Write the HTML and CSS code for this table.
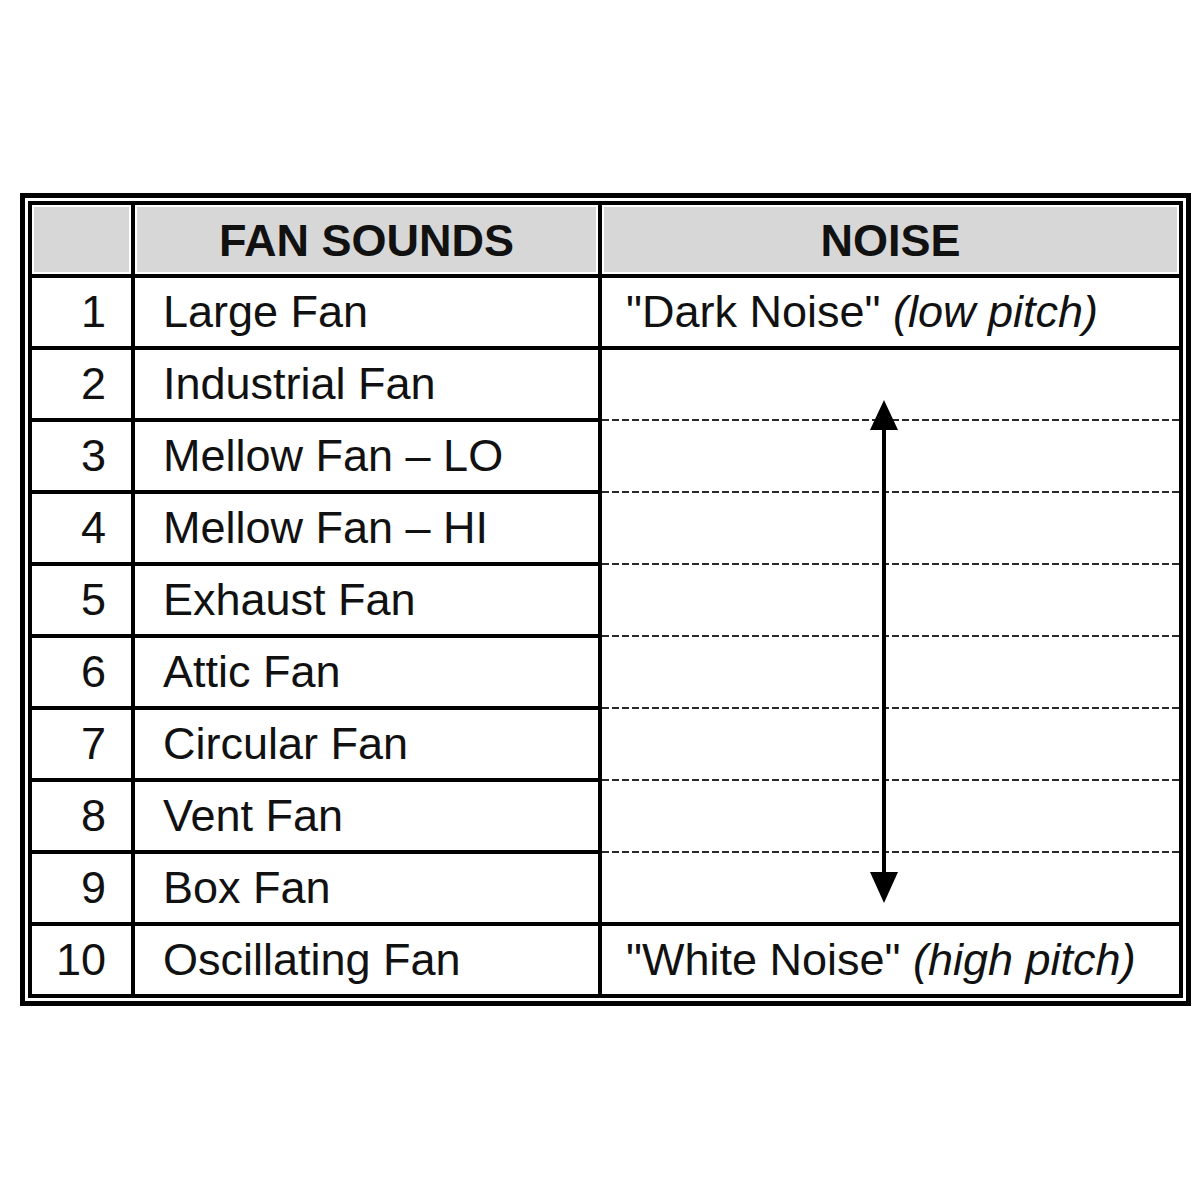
FILE: index.html
```html
<!DOCTYPE html>
<html lang="en">
<head>
<meta charset="utf-8">
<title>Fan Sounds</title>
<link rel="stylesheet" href="styles.css">
</head>
<body>
<div class="frame">
  <div class="table">
    <div class="cell head"></div>
    <div class="cell head">FAN SOUNDS</div>
    <div class="cell head">NOISE</div>

    <div class="cell num">1</div>
    <div class="cell name">Large Fan</div>
    <div class="cell noise"><span>"Dark Noise" <i>(low pitch)</i></span></div>

    <div class="cell num">2</div>
    <div class="cell name">Industrial Fan</div>
    <div class="span">
      <div class="sub"></div>
      <div class="sub"></div>
      <div class="sub"></div>
      <div class="sub"></div>
      <div class="sub"></div>
      <div class="sub"></div>
      <div class="sub"></div>
      <div class="sub last"></div>
      <svg class="arrow" width="577" height="572" viewBox="0 0 577 572">
        <rect x="280" y="76" width="4" height="450" fill="#000"/>
        <polygon points="282,50 268,80 296,80" fill="#000"/>
        <polygon points="268,522 296,522 282,553" fill="#000"/>
      </svg>
    </div>

    <div class="cell num">3</div>
    <div class="cell name">Mellow Fan – LO</div>
    <div class="cell num">4</div>
    <div class="cell name">Mellow Fan – HI</div>
    <div class="cell num">5</div>
    <div class="cell name">Exhaust Fan</div>
    <div class="cell num">6</div>
    <div class="cell name">Attic Fan</div>
    <div class="cell num">7</div>
    <div class="cell name">Circular Fan</div>
    <div class="cell num">8</div>
    <div class="cell name">Vent Fan</div>
    <div class="cell num">9</div>
    <div class="cell name">Box Fan</div>

    <div class="cell num">10</div>
    <div class="cell name">Oscillating Fan</div>
    <div class="cell noise"><span>"White Noise" <i>(high pitch)</i></span></div>
  </div>
</div>
</body>
</html>
```

FILE: styles.css
```css
html, body {
  margin: 0;
  padding: 0;
  background: #fff;
}

body {
  font-family: "Liberation Sans", Arial, sans-serif;
  color: #111;
}

.frame {
  margin: 193px 0 0 20px;
  width: 1155px;
  border: 5px solid #000;
  padding: 3px;
}

.table {
  display: grid;
  grid-template-columns: 99px 463px 577px;
  grid-template-rows: 69px repeat(10, 68px);
  gap: 4px;
  padding: 4px;
  background: #000;
}

.cell {
  background: #fff;
  font-size: 45px;
  display: flex;
  align-items: center;
  white-space: nowrap;
}

.head {
  background: #d7d7d7;
  box-shadow: inset 0 0 0 2px #fff;
  font-weight: bold;
  justify-content: center;
  padding-top: 2px;
}

.num {
  justify-content: flex-end;
  padding-right: 25px;
}

.name {
  padding-left: 28px;
}

.noise {
  padding-left: 24px;
}

.span {
  grid-column: 3;
  grid-row: 3 / span 8;
  position: relative;
  background: #fff;
  display: grid;
  grid-template-rows: repeat(8, 1fr);
  row-gap: 4px;
}

.sub {
  position: relative;
}

.sub::after {
  content: "";
  position: absolute;
  left: 0;
  right: 0;
  bottom: -3px;
  height: 2px;
  background: repeating-linear-gradient(90deg, #2a2a2a 0 7px, transparent 7px 10px);
}

.sub.last::after {
  display: none;
}

.arrow {
  position: absolute;
  left: 0;
  top: 0;
}
```
